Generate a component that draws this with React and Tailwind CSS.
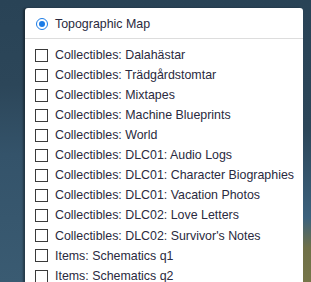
import { useState } from "react";

const layers = [
  "Collectibles: Dalahästar",
  "Collectibles: Trädgårdstomtar",
  "Collectibles: Mixtapes",
  "Collectibles: Machine Blueprints",
  "Collectibles: World",
  "Collectibles: DLC01: Audio Logs",
  "Collectibles: DLC01: Character Biographies",
  "Collectibles: DLC01: Vacation Photos",
  "Collectibles: DLC02: Love Letters",
  "Collectibles: DLC02: Survivor's Notes",
  "Items: Schematics q1",
  "Items: Schematics q2",
];

export default function App() {
  const [checked, setChecked] = useState({});

  return (
    <div
      className="h-[282px] w-[311px] overflow-hidden pt-[8px] pl-[25px] font-['Liberation_Sans',Arial,sans-serif] text-[12.4px] text-[#2a2a40]"
      style={{
        background:
          "linear-gradient(180deg, #294356 0%, #2c4659 30%, #34536a 55%, #3a5b72 100%)",
      }}
    >
      <div className="flex h-[300px]">
        <div className="w-[278px] rounded-t-[3px] bg-white shadow-[-2px_0_2px_rgba(0,0,0,0.35)]">
          {/* base layer */}
          <div className="flex h-[31px] items-center border-b border-[#dddddd] pt-[2px] pl-[11px]">
            <span className="flex h-[12px] w-[12px] items-center justify-center rounded-full border border-[#1c7ce6]">
              <span className="h-[6px] w-[6px] rounded-full bg-[#1c7ce6]" />
            </span>
            <span className="ml-[7px]">Topographic Map</span>
          </div>

          {/* overlays */}
          <div className="pt-[6px]">
            {layers.map((name, i) => (
              <label
                key={name}
                className="flex h-[20.1px] cursor-pointer items-center pl-[10px]"
                onClick={() => setChecked({ ...checked, [i]: !checked[i] })}
              >
                <span className="h-[13px] w-[13px] shrink-0 border border-[#3a3a3a] bg-white" />
                <span className="ml-[7px] whitespace-nowrap">{name}</span>
              </label>
            ))}
          </div>
        </div>
        <div
          className="w-[8px]"
          style={{
            background:
              "linear-gradient(180deg, #294356 0%, #2c4659 40%, #3c617c 70%, #6f7048 80%, #7b7a4a 100%)",
          }}
        />
      </div>
    </div>
  );
}
